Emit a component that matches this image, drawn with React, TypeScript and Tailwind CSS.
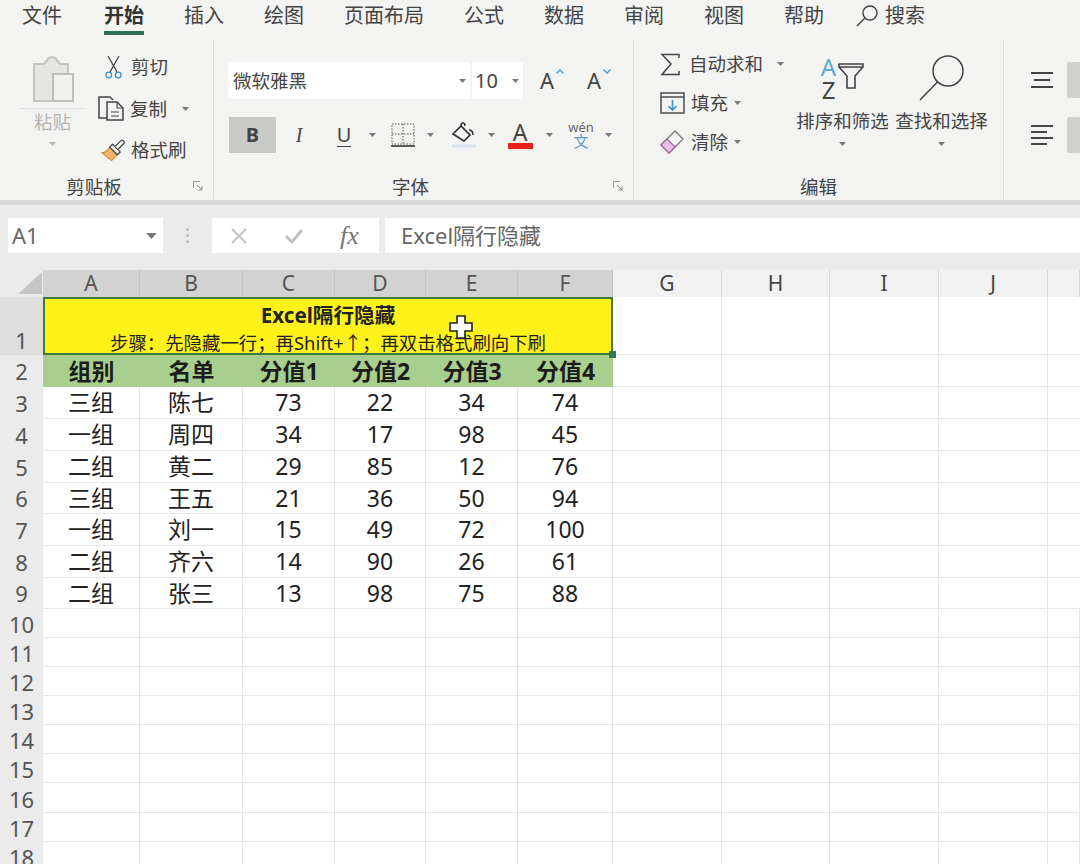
const tabs = ["文件", "开始", "插入", "绘图", "页面布局", "公式", "数据", "审阅", "视图", "帮助"]

const columns = [
  { name: "A", selected: true },
  { name: "B", selected: true },
  { name: "C", selected: true },
  { name: "D", selected: true },
  { name: "E", selected: true },
  { name: "F", selected: true },
  { name: "G", selected: false },
  { name: "H", selected: false },
  { name: "I", selected: false },
  { name: "J", selected: false },
  { name: "", selected: false },
]

const headerRow = ["组别", "名单", "分值1", "分值2", "分值3", "分值4"]

const rows = [
  ["三组", "陈七", "73", "22", "34", "74"],
  ["一组", "周四", "34", "17", "98", "45"],
  ["二组", "黄二", "29", "85", "12", "76"],
  ["三组", "王五", "21", "36", "50", "94"],
  ["一组", "刘一", "15", "49", "72", "100"],
  ["二组", "齐六", "14", "90", "26", "61"],
  ["二组", "张三", "13", "98", "75", "88"],
]

const emptyRows = [10, 11, 12, 13, 14, 15, 16, 17, 18]

function Caret({ className = "" }: { className?: string }) {
  return (
    <svg viewBox="0 0 7 4" className={`w-[7px] h-[4px] shrink-0 ${className}`}>
      <path d="M0 0h7L3.5 4z" fill="#777" />
    </svg>
  )
}

function Launcher() {
  return (
    <svg viewBox="0 0 10 10" className="w-[10px] h-[10px]" fill="none" stroke="#999" strokeWidth="1">
      <path d="M.5 7V.5H7" />
      <path d="M4 4l4.5 4.5M9 5.5V9H5.5" stroke="#888" />
    </svg>
  )
}

function PasteIcon() {
  return (
    <svg viewBox="0 0 42 47" className="w-[42px] h-[47px]" fill="none">
      <path d="M2 9h10l2-3h1c1-5 9-5 10 0h1l2 3h8v10H22v27H2z" fill="#e4e4e2" stroke="#c4c4c2" strokeWidth="2" />
      <rect x="21" y="19" width="20" height="27" fill="#f0f0ee" stroke="#bdbdbb" strokeWidth="2" />
    </svg>
  )
}

function CutIcon() {
  return (
    <svg viewBox="0 0 17 24" className="w-[17px] h-[24px]" fill="none" strokeWidth="1.3">
      <path d="M3 1l9 16M14 1L5 17" stroke="#444" />
      <circle cx="3.8" cy="20" r="2.8" stroke="#3f8fc9" />
      <circle cx="13.2" cy="20" r="2.8" stroke="#3f8fc9" />
    </svg>
  )
}

function CopyIcon() {
  return (
    <svg viewBox="0 0 26 25" className="w-[26px] h-[25px]" fill="none" stroke="#444" strokeWidth="1.5">
      <path d="M10 22H1V1h11l3 3" />
      <path d="M9 6h10l6 6v12H9z" fill="#f3f3f1" />
      <path d="M19 6v6h6M13 16h8M13 20h8" strokeWidth="1.1" />
    </svg>
  )
}

function BrushIcon() {
  return (
    <svg viewBox="0 0 26 24" className="w-[25px] h-[24px]" fill="none">
      <path d="M9 9l8 8-6 6L1 15c4 0 6-2 8-6z" fill="#f2b36b" stroke="#d98a2e" strokeWidth="1.2" />
      <path d="M9 9l3-3 8 8-3 3z" fill="#f3f3f1" stroke="#444" strokeWidth="1.3" />
      <path d="M15 8l6-6c1-1 4 1 3 3l-6 6" fill="#f3f3f1" stroke="#444" strokeWidth="1.3" />
    </svg>
  )
}

function GrowA({ down = false }: { down?: boolean }) {
  return (
    <span className="relative flex w-[24px] h-[26px] items-end text-[22px] leading-[24px] text-[#444]">
      A
      <svg viewBox="0 0 8 5" className="absolute top-[3px] right-0 w-[8px] h-[5px]" fill="none" stroke="#4f97cf" strokeWidth="1.4">
        <path d={down ? "M.5 .5L4 4l3.5-3.5" : "M.5 4.5L4 1l3.5 3.5"} />
      </svg>
    </span>
  )
}

function BorderIcon() {
  return (
    <svg viewBox="0 0 24 24" className="w-[24px] h-[24px]" fill="none" stroke="#555" strokeWidth="1" strokeDasharray="1.5 1.5">
      <path d="M1 1h22v20H1zM12 1v20M1 11h22" />
      <path d="M0 23h24" stroke="#333" strokeWidth="1.6" strokeDasharray="none" />
    </svg>
  )
}

function FillIcon() {
  return (
    <svg viewBox="0 0 28 28" className="w-[28px] h-[28px]" fill="none">
      <path d="M3 13L11 5l9 9-6 6z" stroke="#333" strokeWidth="1.7" fill="#f3f3f1" />
      <path d="M11 5c0-4 4-4 4 0M19 9c3 0 4 2 4 5" stroke="#333" strokeWidth="1.5" />
      <path d="M2 25h24" stroke="#d9e3ee" strokeWidth="3" />
    </svg>
  )
}

function FontColorIcon() {
  return (
    <span className="flex flex-col items-center w-[25px]">
      <span className="text-[23px] leading-[22px] text-[#444]">A</span>
      <span className="w-[25px] h-[6px] bg-[#e8211a]"></span>
    </span>
  )
}

function SumIcon() {
  return (
    <svg viewBox="0 0 20 23" className="w-[20px] h-[23px]" fill="none" stroke="#444" strokeWidth="1.5">
      <path d="M19 5V1.5H2l9 9.5-9 10.5h17V18" />
    </svg>
  )
}

function FillDownIcon() {
  return (
    <svg viewBox="0 0 25 22" className="w-[25px] h-[22px]" fill="none">
      <rect x="1" y="1" width="23" height="20" stroke="#555" strokeWidth="1.6" />
      <path d="M1 5h23" stroke="#555" strokeWidth="1.6" />
      <path d="M12.5 8v10M8.5 14l4 4 4-4" stroke="#3f8fc9" strokeWidth="1.6" />
    </svg>
  )
}

function EraserIcon() {
  return (
    <svg viewBox="0 0 24 24" className="w-[24px] h-[24px]" fill="none" strokeWidth="1.3">
      <path d="M1 15L15 1l8 8L9 23z" fill="#f7f7f5" stroke="#777" />
      <path d="M1 15l6-6 8 8-6 6z" fill="#e7bfe6" stroke="#a86aa8" />
    </svg>
  )
}

function SortIcon() {
  return (
    <span className="flex items-center w-[45px] h-[45px]">
      <span className="flex flex-col w-[17px] items-center text-[24px] leading-[23px]">
        <span className="text-[#58a9de]">A</span>
        <span className="text-[#444]">Z</span>
      </span>
      <svg viewBox="0 0 26 26" className="w-[26px] h-[26px] mb-[3px] ml-[1px]" fill="none" stroke="#444" strokeWidth="1.6">
        <path d="M1 1h24v3l-8 9v12H9V13L1 4zM1 4h24" />
      </svg>
    </span>
  )
}

function FindIcon() {
  return (
    <svg viewBox="0 0 45 46" className="w-[45px] h-[46px]" fill="none" stroke="#444" strokeWidth="1.5">
      <circle cx="29" cy="16" r="15" />
      <path d="M18.5 27L1 45" />
    </svg>
  )
}

function GroupLabel({ text, className = "", launcher = false }: { text: string; className?: string; launcher?: boolean }) {
  return (
    <div className={`relative h-[27px] mt-[2px] flex items-center justify-center text-[18.5px] leading-[27px] text-[#444] ${className}`}>
      {text}
      {launcher && (
        <span className="absolute right-[10px] top-[8px]">
          <Launcher />
        </span>
      )}
    </div>
  )
}

function CursorPlus() {
  return (
    <svg viewBox="0 0 24 24" className="absolute left-[449px] top-[45px] w-[24px] h-[24px]">
      <path d="M8 1h8v7h7v8h-7v7H8v-7H1V8h7z" fill="#fff" stroke="#222" strokeWidth="1.6" />
    </svg>
  )
}

export default function App() {
  return (
    <div className="w-[1080px] h-[864px] overflow-hidden bg-white font-['Noto_Sans','Noto_Sans_CJK_SC',sans-serif]">
      {/* tabs */}
      <div className="h-[40px] bg-[#f3f3f1] flex items-start pl-[22px] gap-[40px] text-[20px] text-[#444]">
        {tabs.map((tab) => (
          <div key={tab} className={`pt-[3px] flex flex-col ${tab === "开始" ? "ml-[2px]" : ""}`}>
            <span className={`leading-[26px] ${tab === "开始" ? "font-bold text-[#333]" : ""}`}>{tab}</span>
            {tab === "开始" && <span className="mt-[2px] h-[4px] bg-[#2f6f55]"></span>}
          </div>
        ))}
        <div className="pt-[3px] flex items-center gap-[7px] ml-[-8px]">
          <svg viewBox="0 0 22 22" className="w-[22px] h-[22px]" fill="none" stroke="#444" strokeWidth="1.4">
            <circle cx="14" cy="8" r="7" />
            <path d="M9 13L1 21" />
          </svg>
          <span className="leading-[26px]">搜索</span>
        </div>
      </div>

      {/* ribbon */}
      <div className="h-[160px] bg-[#f3f3f1] flex text-[18.5px] text-[#444]">
        <div className="w-[214px] shrink-0 border-r border-[#dcdcda] mb-[1px]">
          <div className="h-[131px] flex pl-[20px]">
            <div className="w-[65px] flex flex-col items-center pt-[15px]">
              <PasteIcon />
              <span className="mt-[6px] h-px w-[65px] bg-[#dedede]"></span>
              <span className="leading-[26px] text-[#b5b5b5]">粘贴</span>
              <Caret className="mt-[7px] opacity-50" />
            </div>
            <div className="ml-[13px] pt-[6px] flex flex-col">
              <div className="h-[42px] flex items-center">
                <span className="w-[33px] pl-[7px]">
                  <CutIcon />
                </span>
                <span>剪切</span>
              </div>
              <div className="h-[41px] flex items-center">
                <span className="w-[32px]">
                  <CopyIcon />
                </span>
                <span>复制</span>
                <Caret className="ml-[15px]" />
              </div>
              <div className="h-[41px] flex items-center">
                <span className="w-[33px] pl-[3px]">
                  <BrushIcon />
                </span>
                <span>格式刷</span>
              </div>
            </div>
          </div>
          <GroupLabel text="剪贴板" className="pr-[25px]" launcher />
        </div>

        <div className="w-[420px] shrink-0 border-r border-[#dcdcda] mb-[1px]">
          <div className="h-[131px] pt-[22px] pl-[14px]">
            <div className="h-[37px] flex">
              <div className="w-[242px] bg-white flex items-center pl-[5px] pr-[4px] justify-between">
                <span>微软雅黑</span>
                <Caret />
              </div>
              <div className="ml-[2px] w-[51px] bg-white flex items-center pl-[3px] pr-[4px] justify-between text-[20px]">
                <span>10</span>
                <Caret />
              </div>
              <div className="ml-[17px] mt-[4px]">
                <GrowA />
              </div>
              <div className="ml-[23px] mt-[4px]">
                <GrowA down />
              </div>
            </div>
            <div className="mt-[18px] h-[36px] flex items-center pl-[1px]">
              <div className="w-[47px] h-[36px] bg-[#c9c9c7] flex items-center justify-center text-[20px] font-bold">B</div>
              <div className="w-[46px] text-center text-[20px] italic font-['Liberation_Serif',serif]">I</div>
              <div className="w-[44px] flex justify-center">
                <span className="text-[20px] leading-[23px] border-b-[1.5px] border-[#444]">U</span>
              </div>
              <Caret className="ml-[3px]" />
              <div className="w-[46px] ml-[4px] flex justify-center">
                <BorderIcon />
              </div>
              <Caret className="ml-[1px]" />
              <div className="w-[46px] ml-[7px] flex justify-center">
                <FillIcon />
              </div>
              <Caret className="ml-[1px]" />
              <div className="w-[44px] ml-[3px] flex justify-center">
                <FontColorIcon />
              </div>
              <Caret className="ml-[4px]" />
              <div className="w-[44px] ml-[6px] flex flex-col items-center leading-none">
                <span className="text-[13px] leading-[13px] text-[#666]">wén</span>
                <span className="text-[15px] leading-[15px] text-[#5b9bd0]">文</span>
              </div>
              <Caret className="ml-[2px]" />
            </div>
          </div>
          <GroupLabel text="字体" className="pr-[26px]" launcher />
        </div>

        <div className="w-[370px] shrink-0 border-r border-[#dcdcda] mb-[1px]">
          <div className="h-[131px] flex">
            <div className="w-[162px] pl-[26px] pt-[5px] flex flex-col">
              <div className="h-[38px] flex items-center">
                <span className="w-[29px]">
                  <SumIcon />
                </span>
                <span>自动求和</span>
                <Caret className="ml-[14px]" />
              </div>
              <div className="h-[39px] flex items-center">
                <span className="w-[31px]">
                  <FillDownIcon />
                </span>
                <span>填充</span>
                <Caret className="ml-[6px]" />
              </div>
              <div className="h-[39px] flex items-center">
                <span className="w-[31px]">
                  <EraserIcon />
                </span>
                <span>清除</span>
                <Caret className="ml-[6px]" />
              </div>
            </div>
            <div className="w-[99px] pr-[6px] pt-[15px] flex flex-col items-center">
              <SortIcon />
              <span className="mt-[8px] leading-[26px] whitespace-nowrap">排序和筛选</span>
              <Caret className="mt-[8px]" />
            </div>
            <div className="w-[93px] pt-[15px] flex flex-col items-center">
              <FindIcon />
              <span className="mt-[7px] leading-[26px] whitespace-nowrap">查找和选择</span>
              <Caret className="mt-[8px]" />
            </div>
          </div>
          <GroupLabel text="编辑" />
        </div>

        <div className="flex-1 pt-[22px] pl-[27px] flex flex-col gap-[19px]">
          <div className="h-[36px] flex items-center gap-[14px]">
            <span className="flex flex-col items-center gap-[5px] w-[22px]">
              <span className="h-[2px] w-[22px] bg-[#444]"></span>
              <span className="h-[2px] w-[16px] bg-[#444]"></span>
              <span className="h-[2px] w-[22px] bg-[#444]"></span>
            </span>
            <span className="w-[30px] h-[36px] bg-[#d0d0ce] rounded-[2px]"></span>
          </div>
          <div className="h-[36px] flex items-center gap-[14px]">
            <span className="flex flex-col gap-[4px] w-[22px]">
              <span className="h-[2px] w-[22px] bg-[#444]"></span>
              <span className="h-[2px] w-[16px] bg-[#444]"></span>
              <span className="h-[2px] w-[22px] bg-[#444]"></span>
              <span className="h-[2px] w-[16px] bg-[#444]"></span>
            </span>
            <span className="w-[30px] h-[36px] bg-[#d0d0ce] rounded-[2px]"></span>
          </div>
        </div>
      </div>

      {/* formula bar */}
      <div className="h-[5px] bg-[#d9d9d9]"></div>
      <div className="h-[65px] bg-[#ebebeb] pt-[13px] pl-[8px] flex items-start text-[#666]">
        <div className="w-[155px] h-[35px] bg-white flex items-center justify-between pl-[4px] pr-[8px] text-[22px]">
          <span>A1</span>
          <Caret className="scale-150" />
        </div>
        <div className="w-[49px] h-[35px] flex flex-col items-center justify-center gap-[3px]">
          <span className="w-[3px] h-[3px] rounded-full bg-[#bbb]"></span>
          <span className="w-[3px] h-[3px] rounded-full bg-[#bbb]"></span>
          <span className="w-[3px] h-[3px] rounded-full bg-[#bbb]"></span>
        </div>
        <div className="w-[167px] h-[35px] bg-white flex items-center pl-[18px] gap-[36px]">
          <svg viewBox="0 0 18 18" className="w-[18px] h-[18px]" fill="none" stroke="#c4c4c4" strokeWidth="2">
            <path d="M2 2l14 14M16 2L2 16" />
          </svg>
          <svg viewBox="0 0 20 16" className="w-[20px] h-[16px]" fill="none" stroke="#c0c0c0" strokeWidth="3">
            <path d="M2 8l6 6L18 2" />
          </svg>
          <span className="text-[26px] leading-none italic text-[#777] font-['Liberation_Serif',serif]">fx</span>
        </div>
        <div className="ml-[6px] flex-1 h-[35px] bg-white flex items-center pl-[16px] text-[22px]">Excel隔行隐藏</div>
      </div>

      {/* sheet */}
      <div className="relative grid grid-cols-[43px_97px_103px_92px_91px_92px_95px_109px_108px_109px_109px_32px] grid-rows-[27px_58px_32px_32px_32px_32px_31px_32px_32px_31px_29px_29px_29px_29px_29px_29px_30px_29px_29px]">
        <div className="bg-[#ebebeb] flex items-end justify-end pr-px pb-[3px]">
          <svg viewBox="0 0 24 22" className="w-[24px] h-[22px]">
            <path d="M24 0v22H0z" fill="#c6c6c6" />
          </svg>
        </div>
        {columns.map((col, i) => (
          <div
            key={i}
            className={`flex items-center justify-center border-r text-[21px] leading-none ${
              col.selected ? "bg-[#d2d2d2] border-[#c2c2c2] text-[#555]" : "bg-[#f1f1f1] border-[#d8d8d8] text-[#444]"
            }`}
          >
            {col.name}
          </div>
        ))}

        <div className="bg-[#dedede] flex items-end justify-center text-[22px] leading-[30px] text-[#555]">1</div>
        <div className="relative col-span-6 bg-[#fff21a] border-2 border-[#3f7a3c] flex flex-col items-center text-[#222]">
          <span className="mt-[1px] text-[20.6px] leading-[30px] font-bold whitespace-nowrap">Excel隔行隐藏</span>
          <span className="text-[18.4px] leading-[25px] whitespace-nowrap">步骤：先隐藏一行；再Shift+↑；再双击格式刷向下刷</span>
          <span className="absolute right-[-5px] bottom-[-5px] w-[7px] h-[7px] bg-[#2f7a4f]"></span>
        </div>
        <div className="border-r border-b border-[#e6e6e6]"></div>
        <div className="border-r border-b border-[#e6e6e6]"></div>
        <div className="border-r border-b border-[#e6e6e6]"></div>
        <div className="border-r border-b border-[#e6e6e6]"></div>
        <div className="border-b border-[#e6e6e6]"></div>

        <div className="bg-[#ebebeb] flex items-center justify-center text-[22px] text-[#555]">2</div>
        {headerRow.map((text) => (
          <div key={text} className="bg-[#a9cf8f] flex items-center justify-center text-[23px] font-bold text-[#1c1c1c]">
            {text}
          </div>
        ))}
        <div className="border-r border-b border-[#e6e6e6]"></div>
        <div className="border-r border-b border-[#e6e6e6]"></div>
        <div className="border-r border-b border-[#e6e6e6]"></div>
        <div className="border-r border-b border-[#e6e6e6]"></div>
        <div className="border-b border-[#e6e6e6]"></div>

        {rows.map((row, r) => (
          <div key={r} className="contents">
            <div className="bg-[#ebebeb] flex items-center justify-center text-[22px] text-[#555]">{r + 3}</div>
            {row.map((text, c) => (
              <div key={c} className="flex items-center justify-center border-r border-b border-[#e6e6e6] text-[23px] text-[#222]">
                {text}
              </div>
            ))}
            <div className="border-r border-b border-[#e6e6e6]"></div>
            <div className="border-r border-b border-[#e6e6e6]"></div>
            <div className="border-r border-b border-[#e6e6e6]"></div>
            <div className="border-r border-b border-[#e6e6e6]"></div>
            <div className="border-b border-[#e6e6e6]"></div>
          </div>
        ))}

        {emptyRows.map((n) => (
          <div key={n} className="contents">
            <div className="bg-[#ebebeb] flex items-center justify-center pt-[2px] text-[22px] text-[#555]">{n}</div>
            {columns.map((col, i) => (
              <div key={i} className="border-r border-b border-[#e6e6e6]"></div>
            ))}
          </div>
        ))}

        <CursorPlus />
      </div>
    </div>
  )
}
